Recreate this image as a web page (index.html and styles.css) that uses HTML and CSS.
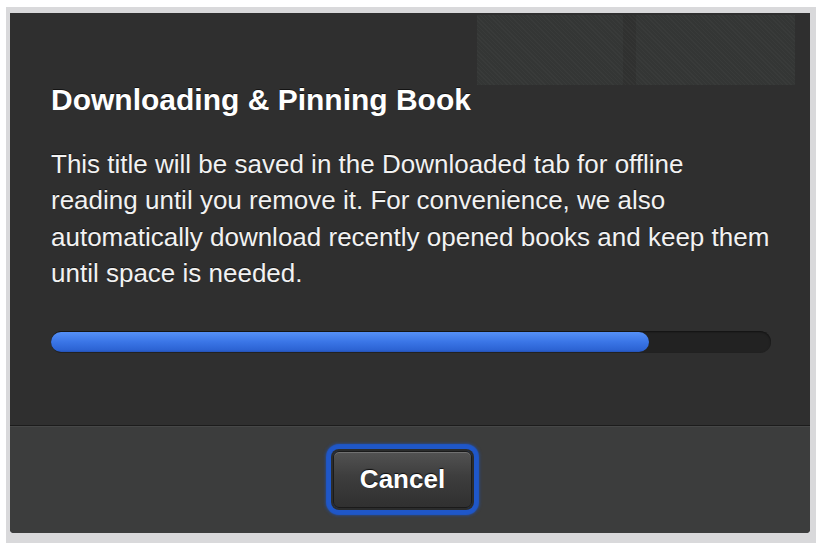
FILE: index.html
```html
<!DOCTYPE html>
<html lang="en">
<head>
<meta charset="utf-8">
<title>Downloading &amp; Pinning Book</title>
<link rel="stylesheet" href="styles.css">
</head>
<body>
<div class="frame">
  <div class="dialog">
    <div class="content">
      <h1 class="title">Downloading &amp; Pinning Book</h1>
      <p class="message">This title will be saved in the Downloaded tab for offline<br>reading until you remove it. For convenience, we also<br>automatically download recently opened books and keep them<br>until space is needed.</p>
      <div class="track"><div class="fill" style="width:83%"></div></div>
    </div>
    <div class="footer">
      <button class="cancel">Cancel</button>
    </div>
  </div>
</div>
</body>
</html>
```

FILE: styles.css
```css
html, body {
  margin: 0;
  padding: 0;
  background: #ffffff;
}
body {
  font-family: "Liberation Sans", Arial, sans-serif;
  width: 823px;
  height: 546px;
  overflow: hidden;
}
.frame {
  margin: 7px 7px 0 6px;
  padding: 6px 6px 10px 4px;
  background: #d9d9db;
  width: 800px;
  height: 520px;
}
.dialog {
  width: 800px;
  height: 520px;
  display: flex;
  flex-direction: column;
  border-radius: 0 0 4px 4px;
  overflow: hidden;
  background-color: #2f2f2f;
  background-image:
    repeating-linear-gradient(45deg, rgba(255,255,255,0.025) 0 1px, rgba(0,0,0,0) 1px 3px),
    linear-gradient(90deg, #343635 0 46%, #303130 46% 50%, #343635 50% 100%);
  background-size: 318px 70px, 318px 70px;
  background-position: 467px 2px, 467px 2px;
  background-repeat: no-repeat;
}
.content {
  height: 412px;
  box-sizing: border-box;
  padding: 69px 40px 0 41px;
}
.title {
  margin: 0;
  font-size: 30px;
  line-height: 36px;
  font-weight: bold;
  color: #ffffff;
  text-shadow: 0 -1px 0 rgba(0,0,0,0.6);
}
.message {
  margin: 28px 0 0 0;
  font-size: 26px;
  line-height: 36.4px;
  color: #f2f2f2;
  white-space: nowrap;
  text-shadow: 0 -1px 0 rgba(0,0,0,0.5);
}
.track {
  margin-top: 39px;
  width: 720px;
  height: 22px;
  box-sizing: border-box;
  padding: 1px 0;
  border-radius: 11px;
  background: #222222;
  box-shadow: inset 0 1px 2px rgba(0,0,0,0.5);
}
.fill {
  height: 20px;
  border-radius: 10px;
  background: linear-gradient(180deg, #5590f7 0%, #3a75e6 50%, #2c63d3 90%, #2452b5 100%);
}
.footer {
  flex: 1;
  display: flex;
  align-items: center;
  justify-content: center;
  border-top: 1px solid #1c1c1c;
  background: #3c3d3d;
  box-shadow: inset 0 1px 0 #464747;
}
.cancel {
  width: 139px;
  height: 57px;
  margin: 0 15px 0 0;
  border: 1px solid #1a1a1a;
  border-radius: 6px;
  background: linear-gradient(180deg, #525252 0%, #3d3d3d 45%, #303030 100%);
  box-shadow:
    inset 0 1px 0 rgba(255,255,255,0.18),
    0 0 0 2px #2b2c2c,
    0 0 1px 7px #1f57c9,
    0 0 3px 8px rgba(31,87,201,0.4);
  color: #ffffff;
  font-family: "Liberation Sans", Arial, sans-serif;
  font-size: 26px;
  font-weight: bold;
  text-shadow: 0 -1px 1px rgba(0,0,0,0.8);
  padding: 0;
}
```
